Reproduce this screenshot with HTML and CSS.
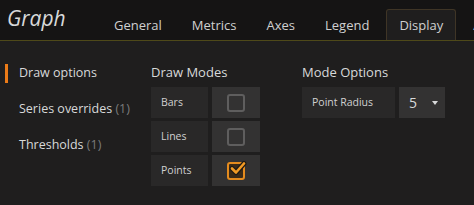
FILE: index.html
```html
<!DOCTYPE html>
<html lang="en">
  <head>
    <meta charset="utf-8" />
    <title>Graph</title>
    <link rel="stylesheet" href="styles.css">
  </head>
  <body>
    <div class="header">
      <div class="title">Graph</div>
      <ul class="tabs">
        <li>General</li>
        <li>Metrics</li>
        <li>Axes</li>
        <li>Legend</li>
        <li class="active">Display</li>
        <li>Alert</li>
      </ul>
    </div>

    <div class="editor">
      <ul class="side">
        <li class="current">Draw options</li>
        <li>Series overrides <span class="count">(1)</span></li>
        <li>Thresholds <span class="count">(1)</span></li>
      </ul>

      <div class="section modes">
        <h5>Draw Modes</h5>
        <div class="row">
          <span class="label">Bars</span>
          <span class="cell"><span class="check"></span></span>
        </div>
        <div class="row">
          <span class="label">Lines</span>
          <span class="cell"><span class="check"></span></span>
        </div>
        <div class="row">
          <span class="label">Points</span>
          <span class="cell">
            <span class="check on">
              <svg width="20" height="16" viewBox="0 0 20 16">
                <path d="M4 7.5 L8 11.5 L16 2.5" fill="none" stroke="#1f1a14" stroke-width="5" stroke-linecap="round" stroke-linejoin="round"/>
                <path d="M4 7.5 L8 11.5 L16 2.5" fill="none" stroke="#f19a24" stroke-width="2.6" stroke-linecap="round" stroke-linejoin="round"/>
              </svg>
            </span>
          </span>
        </div>
      </div>

      <div class="section">
        <h5>Mode Options</h5>
        <div class="row">
          <span class="label wide">Point Radius</span>
          <span class="select">5 <span class="caret"></span></span>
        </div>
      </div>
    </div>
  </body>
</html>
```

FILE: styles.css
```css
html,
body {
  margin: 0;
  height: 100%;
  background: #1f1e1e;
  font-family: "Open Sans", "Noto Sans", sans-serif;
  color: #d8d9da;
}

ul {
  list-style: none;
  margin: 0;
  padding: 0;
}

.header {
  display: flex;
  align-items: flex-end;
  height: 40px;
  background: #151414;
  border-bottom: 1px solid #4e4919;
  white-space: nowrap;
  overflow: hidden;
}

.title {
  flex-shrink: 0;
  align-self: center;
  font-size: 21px;
  font-style: italic;
  padding: 0 0 4px 7px;
  width: 94px;
  color: #d8d9da;
}

.tabs {
  display: flex;
  flex-shrink: 0;
}

.tabs li {
  height: 31px;
  line-height: 31px;
  padding: 0 12px;
  margin-right: 4px;
  font-size: 13px;
  color: #d0d0d0;
  border: 1px solid transparent;
  border-bottom: 0;
  position: relative;
  top: 1px;
}

.tabs .active {
  background: #1f1e1e;
  border-color: #3f3526;
  border-radius: 3px 3px 0 0;
}

.editor {
  display: flex;
}

.side {
  width: 151px;
  padding-top: 14px;
}

.side li {
  height: 36px;
  line-height: 36px;
  padding-left: 19px;
  font-size: 12.5px;
  color: #d8d9da;
  position: relative;
}

.side .current::before {
  content: "";
  position: absolute;
  left: 5px;
  top: 9px;
  width: 3px;
  height: 19px;
  background: #eb7b18;
}

.count {
  color: #7b7b7b;
}

.section {
  padding-top: 21px;
}

.modes {
  width: 151px;
}

h5 {
  margin: 0 0 5px;
  font-size: 13px;
  font-weight: 400;
  line-height: 20px;
  color: #d8d9da;
}

.row {
  display: flex;
  gap: 4px;
  margin-bottom: 3px;
}

.label {
  width: 57px;
  height: 31px;
  line-height: 31px;
  padding-left: 10px;
  box-sizing: border-box;
  background: #292828;
  font-size: 10.5px;
  color: #d0d0d0;
}

.label.wide {
  width: 93px;
}

.cell {
  width: 48px;
  height: 31px;
  background: #333232;
  display: flex;
  align-items: center;
  justify-content: center;
}

.check {
  width: 14px;
  height: 14px;
  border: 2px solid #5f5e5e;
  border-radius: 3px;
  position: relative;
}

.check.on {
  border-color: #e48b1e;
  background: #3a2a18;
}

.check svg {
  position: absolute;
  left: -1px;
  top: -3px;
}

.select {
  width: 46px;
  height: 31px;
  line-height: 31px;
  padding-left: 10px;
  box-sizing: border-box;
  background: #333232;
  font-size: 14px;
  color: #d8d9da;
  position: relative;
}

.caret {
  position: absolute;
  right: 7px;
  top: 14px;
  border-left: 3px solid transparent;
  border-right: 3px solid transparent;
  border-top: 4px solid #d8d9da;
}
```
